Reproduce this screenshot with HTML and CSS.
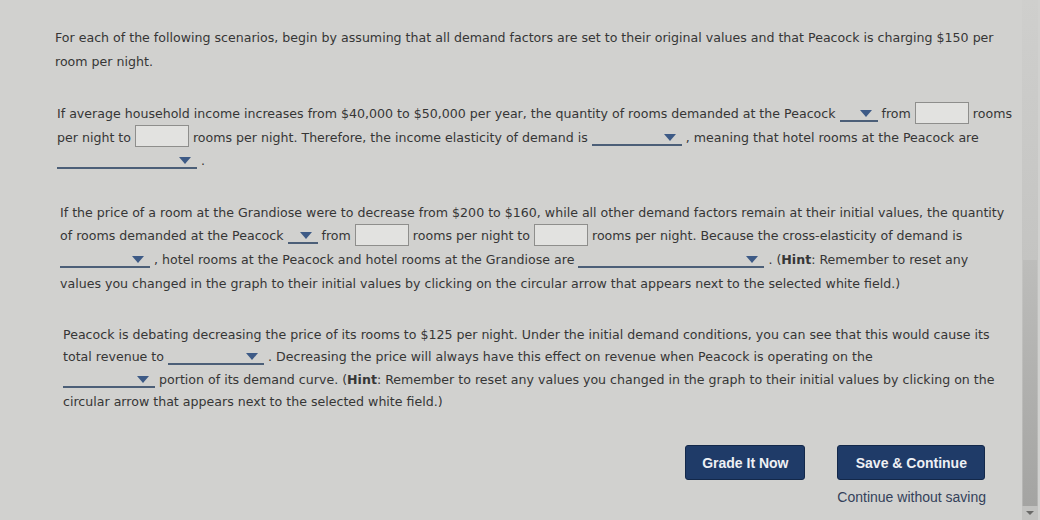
FILE: index.html
```html
<!DOCTYPE html>
<html lang="en">
<head>
<meta charset="utf-8">
<title>Peacock demand scenarios</title>
<link rel="stylesheet" href="styles.css">
</head>
<body>
<div class="page">
  <main class="content">
    <p class="para p1">For each of the following scenarios, begin by assuming that all demand factors are set to their original values and that Peacock is charging $150 per<br>room per night.</p>

    <p class="para p2">If average household income increases from $40,000 to $50,000 per year, the quantity of rooms demanded at the Peacock <span class="dd w38"></span> from <span class="box"></span> rooms<br>per night to <span class="box"></span> rooms per night. Therefore, the income elasticity of demand is <span class="dd w90"></span> , meaning that hotel rooms at the Peacock are<br><span class="dd w140"></span> .</p>

    <p class="para p3">If the price of a room at the Grandiose were to decrease from $200 to $160, while all other demand factors remain at their initial values, the quantity<br>of rooms demanded at the Peacock <span class="dd w30"></span> from <span class="box"></span> rooms per night to <span class="box"></span> rooms per night. Because the cross-elasticity of demand is<br><span class="dd w90"></span> , hotel rooms at the Peacock and hotel rooms at the Grandiose are <span class="dd w186"></span> . (<b>Hint</b>: Remember to reset any<br>values you changed in the graph to their initial values by clicking on the circular arrow that appears next to the selected white field.)</p>

    <p class="para p4">Peacock is debating decreasing the price of its rooms to $125 per night. Under the initial demand conditions, you can see that this would cause its<br>total revenue to <span class="dd w96"></span> . Decreasing the price will always have this effect on revenue when Peacock is operating on the<br><span class="dd w92"></span> portion of its demand curve. (<b>Hint</b>: Remember to reset any values you changed in the graph to their initial values by clicking on the<br>circular arrow that appears next to the selected white field.)</p>

    <div class="actions">
      <button class="btn btn-grade" type="button">Grade It Now</button>
      <div class="save-col">
        <button class="btn btn-save" type="button">Save &amp; Continue</button>
        <a class="skip" href="#">Continue without saving</a>
      </div>
    </div>
  </main>
  <div class="scrollbar">
    <div class="thumb"></div>
    <div class="arrow"></div>
  </div>
</div>
</body>
</html>
```
FILE: styles.css
```css
html, body {
  margin: 0;
  padding: 0;
  height: 100%;
}
body {
  background: #d1d1cf;
  color: #363636;
  font-family: "DejaVu Sans", Verdana, sans-serif;
  font-size: 12.6px;
  overflow: hidden;
}
.page {
  display: flex;
  height: 520px;
}
.content {
  flex: 1;
  padding: 26px 0 0 55px;
}
.para {
  margin: 0;
  line-height: 24px;
  white-space: nowrap;
}
.p2 { margin-top: 28px; padding-left: 2px; line-height: 23.5px; }
.p3 { margin-top: 28px; padding-left: 5px; line-height: 23.8px; }
.p4 { margin-top: 28px; padding-left: 8px; line-height: 22.6px; }

.dd {
  display: inline-block;
  position: relative;
  height: 14px;
  vertical-align: -4px;
  border-bottom: 2px solid #4c5f78;
}
.dd::after {
  content: "";
  position: absolute;
  right: 6px;
  top: 4px;
  border-left: 6px solid transparent;
  border-right: 6px solid transparent;
  border-top: 7px solid #3d5a86;
}
.w30 { width: 30px; }
.w38 { width: 38px; }
.w90 { width: 90px; }
.w92 { width: 92px; }
.w96 { width: 96px; }
.w140 { width: 140px; }
.w186 { width: 186px; }

.box {
  display: inline-block;
  width: 52px;
  height: 20px;
  vertical-align: middle;
  background: #e2e2e0;
  border: 1px solid #8e8e8c;
  margin-top: -4px;
}

.actions {
  display: flex;
  justify-content: flex-end;
  gap: 32px;
  margin-top: 31px;
  padding-right: 36px;
}
.save-col {
  display: flex;
  flex-direction: column;
  align-items: flex-start;
  gap: 9px;
}
.btn {
  font-family: "Liberation Sans", Arial, sans-serif;
  font-weight: bold;
  font-size: 14px;
  color: #eef0f4;
  background: #1f3b68;
  border: 1px solid #13284a;
  border-radius: 3px;
  height: 35px;
  cursor: pointer;
}
.btn-grade { width: 120px; }
.btn-save { width: 148px; }
.skip {
  font-family: "Liberation Sans", Arial, sans-serif;
  font-size: 14px;
  color: #34415a;
  text-decoration: none;
}

.scrollbar {
  width: 16px;
  margin-right: 2px;
  display: flex;
  flex-direction: column;
  background: linear-gradient(#cfcfcd, #c4c4c2 50%, #b4b4b2);
}
.thumb {
  flex: 1;
  margin: 260px 1px 0;
  background: linear-gradient(#bdbdbb, #a4a4a2);
}
.arrow {
  height: 14px;
  position: relative;
  background: #c2c2c0;
}
.arrow::after {
  content: "";
  position: absolute;
  left: 4px;
  top: 5px;
  border-left: 4px solid transparent;
  border-right: 4px solid transparent;
  border-top: 4px solid #6a6a68;
}
```
